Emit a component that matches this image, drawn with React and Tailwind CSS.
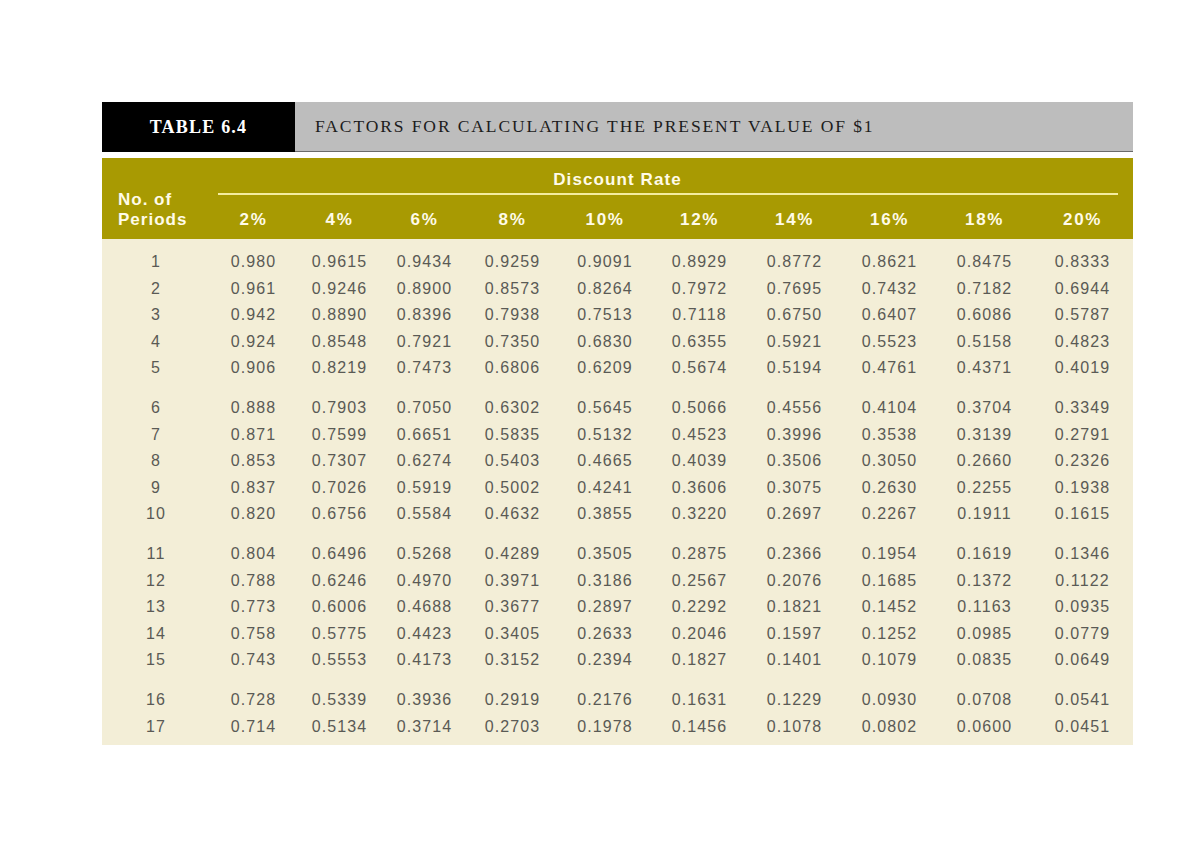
const rates = ['2%', '4%', '6%', '8%', '10%', '12%', '14%', '16%', '18%', '20%']

// present value factors, grouped in blocks of five periods
const groups = [
  [
    ['1', '0.980', '0.9615', '0.9434', '0.9259', '0.9091', '0.8929', '0.8772', '0.8621', '0.8475', '0.8333'],
    ['2', '0.961', '0.9246', '0.8900', '0.8573', '0.8264', '0.7972', '0.7695', '0.7432', '0.7182', '0.6944'],
    ['3', '0.942', '0.8890', '0.8396', '0.7938', '0.7513', '0.7118', '0.6750', '0.6407', '0.6086', '0.5787'],
    ['4', '0.924', '0.8548', '0.7921', '0.7350', '0.6830', '0.6355', '0.5921', '0.5523', '0.5158', '0.4823'],
    ['5', '0.906', '0.8219', '0.7473', '0.6806', '0.6209', '0.5674', '0.5194', '0.4761', '0.4371', '0.4019'],
  ],
  [
    ['6', '0.888', '0.7903', '0.7050', '0.6302', '0.5645', '0.5066', '0.4556', '0.4104', '0.3704', '0.3349'],
    ['7', '0.871', '0.7599', '0.6651', '0.5835', '0.5132', '0.4523', '0.3996', '0.3538', '0.3139', '0.2791'],
    ['8', '0.853', '0.7307', '0.6274', '0.5403', '0.4665', '0.4039', '0.3506', '0.3050', '0.2660', '0.2326'],
    ['9', '0.837', '0.7026', '0.5919', '0.5002', '0.4241', '0.3606', '0.3075', '0.2630', '0.2255', '0.1938'],
    ['10', '0.820', '0.6756', '0.5584', '0.4632', '0.3855', '0.3220', '0.2697', '0.2267', '0.1911', '0.1615'],
  ],
  [
    ['11', '0.804', '0.6496', '0.5268', '0.4289', '0.3505', '0.2875', '0.2366', '0.1954', '0.1619', '0.1346'],
    ['12', '0.788', '0.6246', '0.4970', '0.3971', '0.3186', '0.2567', '0.2076', '0.1685', '0.1372', '0.1122'],
    ['13', '0.773', '0.6006', '0.4688', '0.3677', '0.2897', '0.2292', '0.1821', '0.1452', '0.1163', '0.0935'],
    ['14', '0.758', '0.5775', '0.4423', '0.3405', '0.2633', '0.2046', '0.1597', '0.1252', '0.0985', '0.0779'],
    ['15', '0.743', '0.5553', '0.4173', '0.3152', '0.2394', '0.1827', '0.1401', '0.1079', '0.0835', '0.0649'],
  ],
  [
    ['16', '0.728', '0.5339', '0.3936', '0.2919', '0.2176', '0.1631', '0.1229', '0.0930', '0.0708', '0.0541'],
    ['17', '0.714', '0.5134', '0.3714', '0.2703', '0.1978', '0.1456', '0.1078', '0.0802', '0.0600', '0.0451'],
    ['18', '0.700', '0.4936', '0.3503', '0.2502', '0.1799', '0.1300', '0.0946', '0.0691', '0.0508', '0.0376'],
  ],
]

const cols = 'grid grid-cols-[108px_87px_85px_85px_91px_94px_95px_95px_95px_95px_101px]'

export default function App() {
  return (
    <div className="min-h-[849px] bg-white pt-[102px] pl-[102px] font-['Liberation_Sans',Arial,sans-serif]">
      <div className="w-[1031px]">
        {/* Title bar */}
        <div className="flex h-[50px]">
          <div className="w-[193px] bg-black flex items-center justify-center text-white font-bold text-[18px] tracking-[1.2px] font-['Liberation_Serif','Times_New_Roman',serif]">
            TABLE 6.4
          </div>
          <div className="flex-1 bg-[#bdbdbd] border-b border-[#6a6a6a] flex items-center pl-[20px] text-[#1c1c1c] text-[17.5px] tracking-[1.9px] font-['Liberation_Serif','Times_New_Roman',serif]">
            FACTORS FOR CALCULATING THE PRESENT VALUE OF $1
          </div>
        </div>

        {/* Column headings */}
        <div className={`${cols} content-start mt-[6px] h-[81px] bg-[#a89a02] text-[#fffbe8] font-bold text-[17px] leading-[20px]`}>
          <div className="col-span-full text-center pt-[12px] tracking-[1.1px]">Discount Rate</div>
          <div className="row-span-2 pl-[16px] tracking-[1px]">
            <div>No. of</div>
            <div>Periods</div>
          </div>
          <div className="col-span-10 pt-[3px] pl-[8px] pr-[15px]">
            <div className="h-[2px] bg-[#f4eca0]" />
          </div>
          {rates.map((r) => (
            <div key={r} className="self-end text-center tracking-[1.6px]">
              {r}
            </div>
          ))}
        </div>

        {/* Factors */}
        <div className="h-[506px] overflow-hidden bg-[#f3eed7] pt-[10px] text-[#5a5a55] text-[16px] tracking-[1.1px]">
          {groups.map((group, g) => (
            <div key={g} className={g > 0 ? 'mt-[13.5px]' : ''}>
              {group.map((row) => (
                <div key={row[0]} className={`${cols} h-[26.5px] items-center`}>
                  {row.map((cell, i) => (
                    <div key={i} className="text-center">
                      {cell}
                    </div>
                  ))}
                </div>
              ))}
            </div>
          ))}
        </div>
      </div>
    </div>
  )
}
